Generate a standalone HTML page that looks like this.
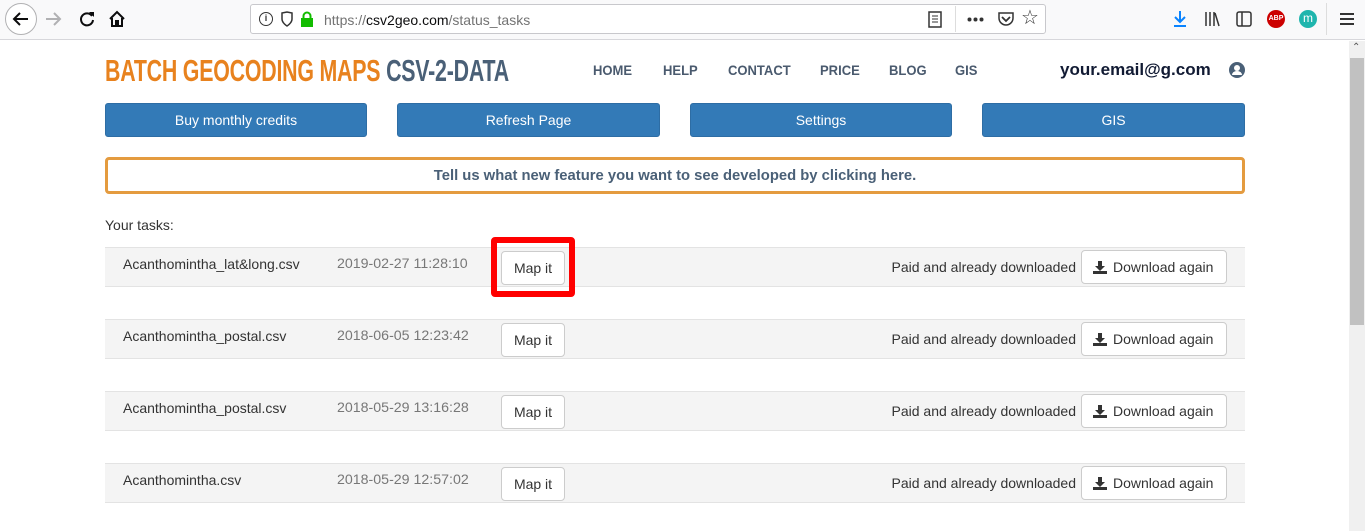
<!DOCTYPE html>
<html><head><meta charset="utf-8"><style>
*{margin:0;padding:0;box-sizing:border-box}
body{width:1365px;height:531px;overflow:hidden;background:#fff;font-family:"Liberation Sans",Arial,sans-serif;position:relative;color:#333}
.a{position:absolute}
.chrome{left:0;top:0;width:1365px;height:40px;background:#f9f9fa;border-bottom:1px solid #d7d7db}
.url{left:250px;top:4px;width:796px;height:30px;background:#fff;border:1px solid #c8c8cc;border-radius:3px}
.nav{top:62px;font-weight:bold;font-size:14px;color:#4a5a6e;transform:scaleX(0.93);transform-origin:left top}
.btn{top:103px;height:34px;width:262px;background:#337ab7;border:1px solid #2e6da4;border-radius:3px;color:#fff;font-size:14px;text-align:center;line-height:32px}
.row{left:105px;width:1140px;height:40px;background:#f4f4f4;border-top:1px solid #e3e3e3;border-bottom:1px solid #e3e3e3;font-size:14px}
.row .f{left:18px;top:8px}
.row .d{left:232px;top:8px;color:#777;font-size:14.2px}
.row .m{left:396px;top:3px;width:64px;height:34px;background:#fff;border:1px solid #ccc;border-radius:4px;text-align:center;line-height:32px}
.row .p{right:169px;top:11px}
.row .g{left:976px;top:2px;width:146px;height:34px;background:#fff;border:1px solid #ccc;border-radius:4px;line-height:32px;padding-left:31px}
.row .g svg{position:absolute;left:11px;top:10px}
</style></head><body>
<div class="a chrome"></div>
<div class="a" style="left:5px;top:3px;width:32px;height:32px;border:1px solid #b1b1b3;border-radius:50%;background:#fff"></div>
<svg class="a" style="left:10px;top:9px" width="22" height="20"><path d="M18 10H4M10 4L4 10l6 6" stroke="#0c0c0d" stroke-width="2" fill="none"/></svg>
<svg class="a" style="left:44px;top:10px" width="20" height="18"><path d="M2 9h14M10 3l6 6-6 6" stroke="#b1b1b3" stroke-width="2" fill="none"/></svg>
<svg class="a" style="left:78px;top:10px" width="18" height="18"><path d="M14 6A6 6 0 1 0 15 10" stroke="#0c0c0d" stroke-width="2" fill="none"/><path d="M11 2h5v5z" fill="#0c0c0d"/></svg>
<svg class="a" style="left:108px;top:10px" width="18" height="18"><path d="M2 9L9 2l7 7M4 8v8h4v-5h2v5h4V8" stroke="#0c0c0d" stroke-width="2" fill="none"/></svg>
<div class="a url"></div>
<div class="a" style="left:259px;top:12px;width:14px;height:14px;border:1.5px solid #333;border-radius:50%;font-size:9px;text-align:center;line-height:11px;font-weight:bold">i</div>
<svg class="a" style="left:281px;top:11px" width="12" height="16"><path d="M1 2l5-1 5 1v6c0 4-5 7-5 7S1 12 1 8z" stroke="#333" stroke-width="1.5" fill="none"/></svg>
<svg class="a" style="left:300px;top:11px" width="14" height="16"><rect x="1" y="7" width="12" height="9" fill="#12bc00"/><path d="M3.5 7V5a3.5 3.5 0 0 1 7 0v2" stroke="#12bc00" stroke-width="2" fill="none"/></svg>
<div class="a" style="left:324px;top:12px;font-size:14px;color:#737373">https://<span style="color:#0c0c0d">csv2geo.com</span>/status_tasks</div>
<svg class="a" style="left:928px;top:11px" width="14" height="18"><rect x="1" y="1" width="12" height="15" stroke="#333" stroke-width="1.5" fill="none"/><path d="M4 5h6M4 8h6M4 11h6" stroke="#333"/></svg>
<div class="a" style="left:955px;top:6px;width:1px;height:26px;background:#ddd"></div>
<svg class="a" style="left:967px;top:17px" width="18" height="5"><circle cx="2.5" cy="2.5" r="2" fill="#333"/><circle cx="8.5" cy="2.5" r="2" fill="#333"/><circle cx="14.5" cy="2.5" r="2" fill="#333"/></svg>
<svg class="a" style="left:998px;top:11px" width="16" height="16"><path d="M1 2h14v5a7 7 0 0 1-14 0z" stroke="#333" stroke-width="1.5" fill="none"/><path d="M4 6l4 4 4-4" stroke="#333" stroke-width="1.8" fill="none"/></svg>
<div class="a" style="left:1021px;top:5px;font-size:20px;color:#333">☆</div>
<svg class="a" style="left:1172px;top:10px" width="16" height="18"><path d="M8 1v11M3 7l5 5 5-5" stroke="#0a84ff" stroke-width="2" fill="none"/><path d="M2 16h12" stroke="#0a84ff" stroke-width="2"/></svg>
<svg class="a" style="left:1204px;top:11px" width="16" height="16"><path d="M2 1v14M6 1v14M10 1v14M11 2l4 13" stroke="#333" stroke-width="1.5" fill="none"/></svg>
<svg class="a" style="left:1236px;top:11px" width="16" height="16"><rect x="1" y="1" width="14" height="14" rx="2" stroke="#333" stroke-width="1.5" fill="none"/><path d="M6 1v14" stroke="#333" stroke-width="1.5"/></svg>
<div class="a" style="left:1267px;top:10px;width:18px;height:18px;background:#c00;border-radius:50%;color:#fff;font-size:7px;font-weight:bold;text-align:center;line-height:18px">ABP</div>
<div class="a" style="left:1299px;top:10px;width:18px;height:18px;background:#1fb5ad;border-radius:50%;color:#fff;font-size:12px;text-align:center;line-height:16px">m</div>
<div class="a" style="left:1326px;top:3px;width:1px;height:32px;background:#ddd"></div>
<svg class="a" style="left:1340px;top:12px" width="14" height="14"><path d="M0 2h14M0 7h14M0 12h14" stroke="#333" stroke-width="2"/></svg>
<div class="a" style="left:1349px;top:41px;width:16px;height:490px;background:#f0f0f0"></div>
<div class="a" style="left:1350px;top:58px;width:14px;height:267px;background:#c1c1c1"></div>
<div class="a" style="left:1352px;top:42px;font-size:10px;color:#555">⌃</div>

<div class="a" style="left:105px;top:54px;font-size:30.5px;font-weight:bold;white-space:nowrap;transform:scaleX(0.7);transform-origin:left top;letter-spacing:-0.3px"><span style="color:#e8821e">BATCH GEOCODING MAPS</span> <span style="color:#4a6077">CSV-2-DATA</span></div>
<div class="a nav" style="left:593px">HOME</div>
<div class="a nav" style="left:663px">HELP</div>
<div class="a nav" style="left:728px">CONTACT</div>
<div class="a nav" style="left:820px">PRICE</div>
<div class="a nav" style="left:889px">BLOG</div>
<div class="a nav" style="left:955px">GIS</div>
<div class="a" style="left:1060px;top:60px;font-size:17px;font-weight:bold;color:#111a33">your.email@g.com</div>
<svg class="a" style="left:1229px;top:62px" width="16" height="16"><circle cx="8" cy="8" r="8" fill="#4a6077"/><circle cx="8" cy="6" r="3" fill="#fff"/><path d="M3 13a5 4 0 0 1 10 0z" fill="#fff"/></svg>

<div class="a btn" style="left:105px">Buy monthly credits</div>
<div class="a btn" style="left:397px;width:263px">Refresh Page</div>
<div class="a btn" style="left:690px">Settings</div>
<div class="a btn" style="left:982px;width:263px">GIS</div>

<div class="a" style="left:105px;top:157px;width:1140px;height:37px;border:3px solid #e49b3f;border-radius:4px;text-align:center;line-height:33px;font-size:14.8px;font-weight:bold;color:#4a6077">Tell us what new feature you want to see developed by clicking here.</div>
<div class="a" style="left:105px;top:217px;font-size:14px">Your tasks:</div>

<div class="a row" style="top:247px"><span class="a f">Acanthomintha_lat&amp;long.csv</span><span class="a d">2019-02-27 11:28:10</span><span class="a m">Map it</span><span class="a p">Paid and already downloaded</span><span class="a g"><svg width="14" height="13"><path d="M5 0h4v5h3L7 10 2 5h3z" fill="#333"/><rect x="0" y="10" width="14" height="3" fill="#333"/></svg>Download again</span></div>
<div class="a row" style="top:319px"><span class="a f">Acanthomintha_postal.csv</span><span class="a d">2018-06-05 12:23:42</span><span class="a m">Map it</span><span class="a p">Paid and already downloaded</span><span class="a g"><svg width="14" height="13"><path d="M5 0h4v5h3L7 10 2 5h3z" fill="#333"/><rect x="0" y="10" width="14" height="3" fill="#333"/></svg>Download again</span></div>
<div class="a row" style="top:391px"><span class="a f">Acanthomintha_postal.csv</span><span class="a d">2018-05-29 13:16:28</span><span class="a m">Map it</span><span class="a p">Paid and already downloaded</span><span class="a g"><svg width="14" height="13"><path d="M5 0h4v5h3L7 10 2 5h3z" fill="#333"/><rect x="0" y="10" width="14" height="3" fill="#333"/></svg>Download again</span></div>
<div class="a row" style="top:463px"><span class="a f">Acanthomintha.csv</span><span class="a d">2018-05-29 12:57:02</span><span class="a m">Map it</span><span class="a p">Paid and already downloaded</span><span class="a g"><svg width="14" height="13"><path d="M5 0h4v5h3L7 10 2 5h3z" fill="#333"/><rect x="0" y="10" width="14" height="3" fill="#333"/></svg>Download again</span></div>

<div class="a" style="left:491px;top:237px;width:84px;height:60px;border:6px solid #f00;border-radius:4px"></div>
</body></html>
